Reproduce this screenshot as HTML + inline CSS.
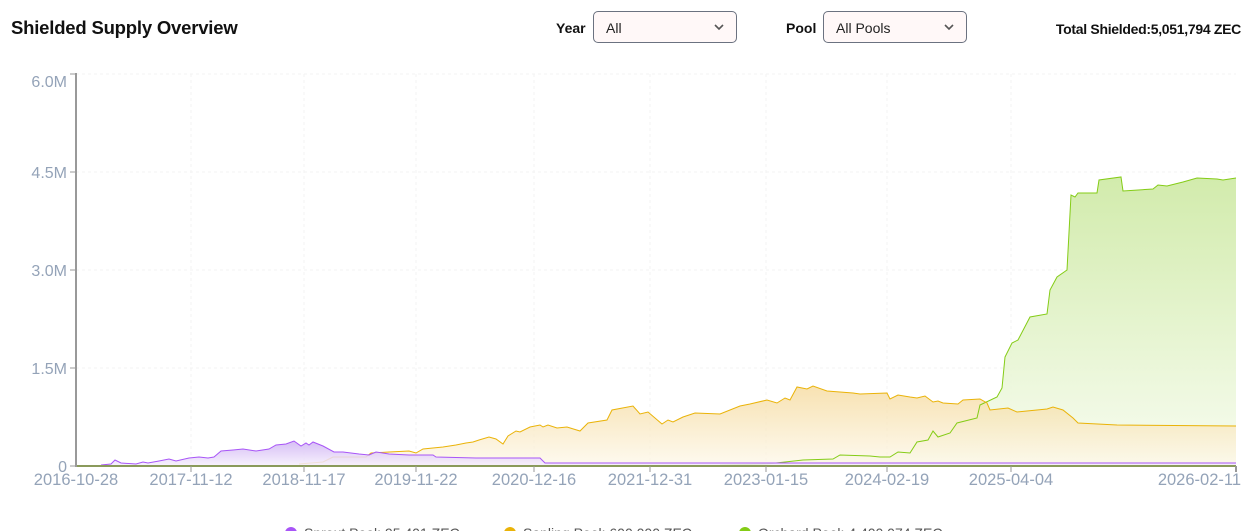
<!DOCTYPE html>
<html><head><meta charset="utf-8"><style>
body{margin:0;width:1255px;height:531px;overflow:hidden;background:#fff;font-family:"Liberation Sans",sans-serif;position:relative}
.t{position:absolute;left:11px;top:17px;font-size:18.5px;font-weight:bold;color:#111;letter-spacing:-0.2px}
.lab{position:absolute;top:20px;font-size:14px;color:#111;font-weight:600}
.sel{position:absolute;top:11px;height:32px;border:1px solid #6b7280;border-radius:5px;background:#fff8f8;font-size:14px;color:#222;box-sizing:border-box;padding:8px 12px}
.sel svg{position:absolute;right:12px;top:12px}
.tot{position:absolute;right:14px;top:21px;font-size:14px;font-weight:600;color:#111;letter-spacing:-0.3px}
</style></head><body>
<div class="t">Shielded Supply Overview</div>
<div class="lab" style="left:556px">Year</div>
<div class="sel" style="left:593px;width:144px">All<svg width="10" height="7"><path d="M1 1L5 5L9 1" stroke="#555" stroke-width="1.6" fill="none"/></svg></div>
<div class="lab" style="left:786px">Pool</div>
<div class="sel" style="left:823px;width:144px">All Pools<svg width="10" height="7"><path d="M1 1L5 5L9 1" stroke="#555" stroke-width="1.6" fill="none"/></svg></div>
<div class="tot">Total Shielded:5,051,794 ZEC</div>
<svg width="1255" height="531" style="position:absolute;left:0;top:0" font-family="Liberation Sans, sans-serif">
<defs>
<linearGradient id="gg" x1="0" y1="0" x2="0" y2="1"><stop offset="0" stop-color="#cde9a3"/><stop offset="1" stop-color="#f7fcef"/></linearGradient>
<linearGradient id="yg" x1="0" y1="0" x2="0" y2="1"><stop offset="0" stop-color="#f5d898"/><stop offset="1" stop-color="#fdf8ea"/></linearGradient>
<linearGradient id="pg" x1="0" y1="0" x2="0" y2="1"><stop offset="0" stop-color="#cfb3f3"/><stop offset="1" stop-color="#f6f0fd"/></linearGradient>
</defs>
<g stroke="#f3f3f3" stroke-dasharray="3 3">
<line x1="76" y1="74" x2="1236" y2="74"/><line x1="76" y1="172" x2="1236" y2="172"/><line x1="76" y1="270" x2="1236" y2="270"/><line x1="76" y1="368" x2="1236" y2="368"/>
<line x1="191" y1="74" x2="191" y2="466"/><line x1="304" y1="74" x2="304" y2="466"/><line x1="416" y1="74" x2="416" y2="466"/><line x1="534" y1="74" x2="534" y2="466"/><line x1="650" y1="74" x2="650" y2="466"/><line x1="766" y1="74" x2="766" y2="466"/><line x1="887" y1="74" x2="887" y2="466"/><line x1="1011" y1="74" x2="1011" y2="466"/>
</g>
<path d="M720 466L720 465L767 464L803 460L833 459L840 455L870 456L880 457L890 457L898 452L910 453L917 442L928 440L933 431L938 437L950 433L957 423L977 418L980 405L997 397L1002 388L1005 357L1012 343L1018 340L1030 317L1047 314L1050 290L1057 277L1067 270L1071 195L1075 197L1078 193L1097 193L1099 180L1121 177L1123 191L1153 189L1158 185L1167 186L1183 182L1197 178L1217 179L1223 180L1236 178L1236 466Z" fill="url(#gg)" fill-opacity="0.9"/>
<path d="M299 466L299 464L323 462L333 457L366 457L371 453L389 452L409 451L416 453L423 449L443 447L456 445L466 443L473 442L479 440L489 437L496 439L503 444L508 436L516 431L520 432L530 427L540 425L543 427L548 425L557 428L567 427L580 431L588 423L607 420L612 410L633 406L640 414L648 412L662 424L668 420L673 422L683 417L695 413L720 414L740 406L750 404L767 400L777 403L785 398L790 400L797 387L807 389L813 386L827 391L853 393L860 394L887 393L890 399L898 395L910 397L917 398L925 396L933 402L938 401L943 403L958 404L963 400L980 399L987 403L990 410L1008 408L1017 412L1047 409L1053 407L1063 410L1073 418L1078 423L1117 425L1236 426L1236 466Z" fill="url(#yg)" fill-opacity="0.75"/>
<path d="M720 465L767 464L803 460L833 459L840 455L870 456L880 457L890 457L898 452L910 453L917 442L928 440L933 431L938 437L950 433L957 423L977 418L980 405L997 397L1002 388L1005 357L1012 343L1018 340L1030 317L1047 314L1050 290L1057 277L1067 270L1071 195L1075 197L1078 193L1097 193L1099 180L1121 177L1123 191L1153 189L1158 185L1167 186L1183 182L1197 178L1217 179L1223 180L1236 178" fill="none" stroke="#84cc16" stroke-width="1"/>
<path d="M299 464L323 462L333 457L366 457L371 453L389 452L409 451L416 453L423 449L443 447L456 445L466 443L473 442L479 440L489 437L496 439L503 444L508 436L516 431L520 432L530 427L540 425L543 427L548 425L557 428L567 427L580 431L588 423L607 420L612 410L633 406L640 414L648 412L662 424L668 420L673 422L683 417L695 413L720 414L740 406L750 404L767 400L777 403L785 398L790 400L797 387L807 389L813 386L827 391L853 393L860 394L887 393L890 399L898 395L910 397L917 398L925 396L933 402L938 401L943 403L958 404L963 400L980 399L987 403L990 410L1008 408L1017 412L1047 409L1053 407L1063 410L1073 418L1078 423L1117 425L1236 426" fill="none" stroke="#eab308" stroke-width="1"/>
<path d="M101 466L101 465L111 464L115 460L121 463L136 464L143 462L148 463L159 461L169 459L176 461L189 458L199 457L208 458L214 457L221 451L233 450L243 449L256 451L269 449L276 445L286 444L294 441L301 446L306 443L309 445L313 442L323 446L334 452L343 452L359 454L369 455L376 452L389 454L409 455L433 455L436 457L476 458L540 458L545 463L1236 463L1236 466Z" fill="url(#pg)" fill-opacity="0.85"/>
<path d="M101 465L111 464L115 460L121 463L136 464L143 462L148 463L159 461L169 459L176 461L189 458L199 457L208 458L214 457L221 451L233 450L243 449L256 451L269 449L276 445L286 444L294 441L301 446L306 443L309 445L313 442L323 446L334 452L343 452L359 454L369 455L376 452L389 454L409 455L433 455L436 457L476 458L540 458L545 463L1236 463" fill="none" stroke="#a855f7" stroke-width="1"/>
<line x1="76" y1="466" x2="1236" y2="466" stroke="#8a9a5b" stroke-width="2"/>
<g stroke="#999" stroke-width="2"><line x1="76" y1="73" x2="76" y2="467"/><line x1="1236" y1="466" x2="1236" y2="472"/></g>
<g stroke="#999"><line x1="70" y1="74" x2="76" y2="74"/><line x1="70" y1="172" x2="76" y2="172"/><line x1="70" y1="270" x2="76" y2="270"/><line x1="70" y1="368" x2="76" y2="368"/><line x1="70" y1="466" x2="76" y2="466"/>
<line x1="191" y1="466" x2="191" y2="472"/><line x1="304" y1="466" x2="304" y2="472"/><line x1="416" y1="466" x2="416" y2="472"/><line x1="534" y1="466" x2="534" y2="472"/><line x1="650" y1="466" x2="650" y2="472"/><line x1="766" y1="466" x2="766" y2="472"/><line x1="887" y1="466" x2="887" y2="472"/><line x1="1011" y1="466" x2="1011" y2="472"/></g>
<g fill="#94a3b8" font-size="16" text-anchor="end"><text x="67" y="87">6.0M</text><text x="67" y="178">4.5M</text><text x="67" y="276">3.0M</text><text x="67" y="374">1.5M</text><text x="67" y="472">0</text></g>
<g fill="#94a3b8" font-size="16.5" text-anchor="middle"><text x="76" y="485">2016-10-28</text><text x="191" y="485">2017-11-12</text><text x="304" y="485">2018-11-17</text><text x="416" y="485">2019-11-22</text><text x="534" y="485">2020-12-16</text><text x="650" y="485">2021-12-31</text><text x="766" y="485">2023-01-15</text><text x="887" y="485">2024-02-19</text><text x="1011" y="485">2025-04-04</text><text x="1241" y="485" text-anchor="end">2026-02-11</text></g>
<g font-size="14" fill="#555"><circle cx="291" cy="533" r="6" fill="#a855f7"/><text x="304" y="538">Sprout Pool: 95,401 ZEC</text>
<circle cx="510" cy="533" r="6" fill="#eab308"/><text x="523" y="538">Sapling Pool: 600,000 ZEC</text>
<circle cx="745" cy="533" r="6" fill="#84cc16"/><text x="758" y="538">Orchard Pool: 4,400,074 ZEC</text></g>
</svg>
</body></html>
